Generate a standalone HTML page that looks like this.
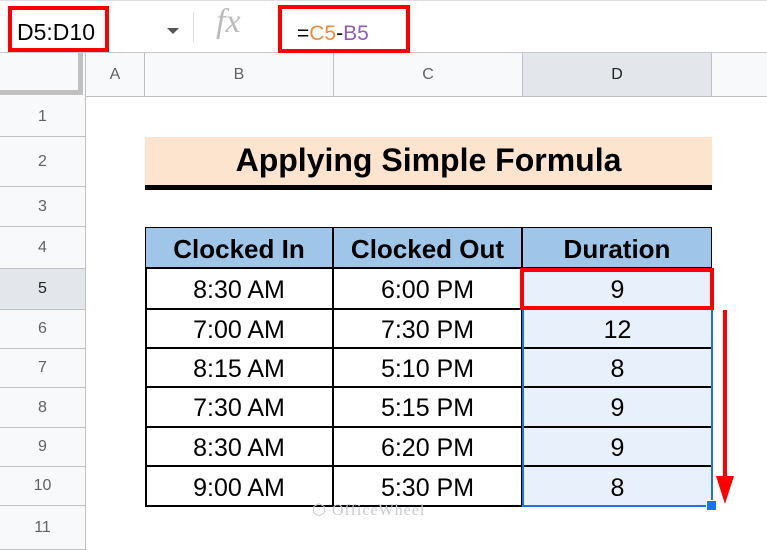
<!DOCTYPE html><html><head><style>
*{margin:0;padding:0;box-sizing:border-box}
body{width:767px;height:550px;overflow:hidden;background:#fff;font-family:"Liberation Sans",Arial,sans-serif;position:relative}
.a{position:absolute}
.hd{background:#f8f9fa;color:#5f6368;font-size:16px;display:flex;align-items:center;justify-content:center;border-right:1px solid #c0c0c0;border-bottom:1px solid #c0c0c0}
.c{font-size:25px;display:flex;align-items:center;justify-content:center;color:#000;padding-top:3px}
</style></head><body>
<div class="a" style="left:0;top:0;width:767px;height:53px;border-bottom:1px solid #c8c8c8"></div>
<div class="a" style="left:0;top:0;width:767px;height:1px;background:#ddd"></div>
<div class="a" style="left:8px;top:6px;width:101px;height:46px;border:4px solid #f00;font-size:23px;padding:9px 0 0 5px;color:#000">D5:D10</div>
<div class="a" style="left:167px;top:28px;border-left:6px solid transparent;border-right:6px solid transparent;border-top:6px solid #555"></div>
<div class="a" style="left:193px;top:12px;width:1px;height:30px;background:#ddd"></div>
<div class="a" style="left:216px;top:3px;font-family:'Liberation Serif',serif;font-style:italic;font-size:34px;color:#bbb">fx</div>
<div class="a" style="left:278px;top:5px;width:132px;height:48px;border:4px solid #f00;font-size:21px;padding:13px 0 0 15px;color:#000">=<span style="color:#f08a3c">C5</span>-<span style="color:#8e5bb5">B5</span></div>
<div class="a" style="left:0;top:53px;width:86px;height:44px;background:#f8f9fa;border-right:1px solid #c0c0c0"></div>
<div class="a" style="left:0;top:90px;width:82px;height:5px;background:#c0c0c0"></div>
<div class="a" style="left:78px;top:53px;width:5px;height:42px;background:#c0c0c0"></div>
<div class="a hd" style="left:86px;top:53px;width:59px;height:44px">A</div>
<div class="a hd" style="left:145px;top:53px;width:189px;height:44px">B</div>
<div class="a hd" style="left:334px;top:53px;width:189px;height:44px">C</div>
<div class="a hd" style="left:523px;top:53px;width:189px;height:44px;background:#e3e6ea;color:#222">D</div>
<div class="a hd" style="left:712px;top:53px;width:60px;height:44px"></div>
<div class="a hd" style="left:0;top:97px;width:86px;height:40px">1</div>
<div class="a hd" style="left:0;top:137px;width:86px;height:50px">2</div>
<div class="a hd" style="left:0;top:187px;width:86px;height:40px">3</div>
<div class="a hd" style="left:0;top:227px;width:86px;height:42px">4</div>
<div class="a hd" style="left:0;top:269px;width:86px;height:41px;background:#e3e6ea;color:#222">5</div>
<div class="a hd" style="left:0;top:310px;width:86px;height:39px">6</div>
<div class="a hd" style="left:0;top:349px;width:86px;height:39px">7</div>
<div class="a hd" style="left:0;top:388px;width:86px;height:40px">8</div>
<div class="a hd" style="left:0;top:428px;width:86px;height:39px">9</div>
<div class="a hd" style="left:0;top:467px;width:86px;height:39px">10</div>
<div class="a hd" style="left:0;top:506px;width:86px;height:44px">11</div>
<div class="a" style="left:145px;top:137px;width:567px;height:53px;background:#fce4cf;border-bottom:5px solid #000;font-size:32px;font-weight:bold;display:flex;align-items:center;justify-content:center;padding-bottom:2px">Applying Simple Formula</div>
<div class="a" style="left:145px;top:227px;width:567px;height:280px;border:2px solid #000"></div>
<div class="a c" style="left:146px;top:228px;width:188px;height:41px;background:#9fc5e8;font-weight:bold;font-size:26px;border-right:2px solid #000;border-bottom:2px solid #000">Clocked In</div>
<div class="a c" style="left:334px;top:228px;width:189px;height:41px;background:#9fc5e8;font-weight:bold;font-size:26px;border-right:2px solid #000;border-bottom:2px solid #000">Clocked Out</div>
<div class="a c" style="left:523px;top:228px;width:188px;height:41px;background:#9fc5e8;font-weight:bold;font-size:26px;border-bottom:2px solid #000">Duration</div>
<div class="a" style="left:523px;top:269px;width:189px;height:237px;background:#e8f0fc"></div>
<div id="rows"></div>
<script>
var t=[269,310,349,388,428,467,506],d=[["8:30 AM","6:00 PM","9"],["7:00 AM","7:30 PM","12"],["8:15 AM","5:10 PM","8"],["7:30 AM","5:15 PM","9"],["8:30 AM","6:20 PM","9"],["9:00 AM","5:30 PM","8"]],h="";
for(var i=0;i<6;i++){var y=t[i],hh=t[i+1]-y;var bb=i<5?"border-bottom:2px solid #000;":"";
h+='<div class="a c" style="left:146px;top:'+y+'px;width:188px;height:'+hh+'px;border-right:2px solid #000;'+bb+'">'+d[i][0]+'</div>';
h+='<div class="a c" style="left:334px;top:'+y+'px;width:189px;height:'+hh+'px;border-right:2px solid #000;'+bb+'">'+d[i][1]+'</div>';
h+='<div class="a c" style="left:523px;top:'+y+'px;width:189px;height:'+hh+'px;'+bb+'">'+d[i][2]+'</div>';}
document.getElementById("rows").innerHTML=h;
</script>
<div class="a" style="left:522px;top:269px;width:191px;height:238px;border:2px solid #1a73e8"></div>
<div class="a" style="left:706px;top:500px;width:11px;height:11px;background:#1a73e8;border:1px solid #fff"></div>
<div class="a" style="left:520px;top:268px;width:194px;height:42px;border:4px solid #f00"></div>
<div class="a" style="left:723px;top:310px;width:4px;height:170px;background:#f00"></div>
<div class="a" style="left:716px;top:476px;border-left:9px solid transparent;border-right:9px solid transparent;border-top:28px solid #f00"></div>
<div class="a" style="left:312px;top:500px;font-family:'Liberation Serif',serif;font-size:16px;color:#c9ccd2;letter-spacing:1px">⬡ OfficeWheel</div>
</body></html>
